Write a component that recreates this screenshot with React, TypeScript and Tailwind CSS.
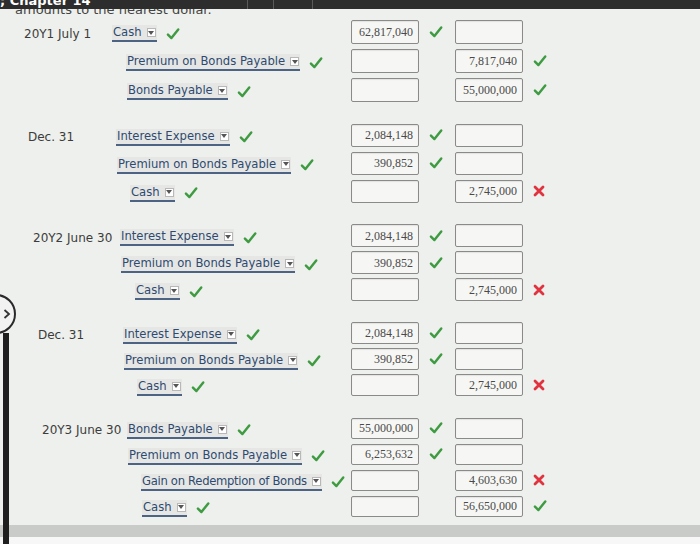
import React from 'react';

type Mark = 'ok' | 'bad' | null;

interface Row {
  date?: string;
  dateCls: string;
  account: string;
  acctCls?: string;
  debit?: string;
  debitMark?: Mark;
  credit?: string;
  creditMark?: Mark;
}

interface Section {
  rowCls: string;
  inputCls: string;
  rows: Row[];
}

const sections: Section[] = [
  {
    rowCls: 'h-[29px]',
    inputCls: 'h-[24px]',
    rows: [
      { date: '20Y1 July 1', dateCls: 'w-[112px] pl-[24px]', account: 'Cash', debit: '62,817,040', debitMark: 'ok' },
      { dateCls: 'w-[126px]', account: 'Premium on Bonds Payable', credit: '7,817,040', creditMark: 'ok' },
      { dateCls: 'w-[127px]', account: 'Bonds Payable', credit: '55,000,000', creditMark: 'ok' },
    ],
  },
  {
    rowCls: 'h-[28px]',
    inputCls: 'h-[23px]',
    rows: [
      { date: 'Dec. 31', dateCls: 'w-[116px] pl-[28px]', account: 'Interest Expense', debit: '2,084,148', debitMark: 'ok' },
      { dateCls: 'w-[117px]', account: 'Premium on Bonds Payable', debit: '390,852', debitMark: 'ok' },
      { dateCls: 'w-[130px]', account: 'Cash', credit: '2,745,000', creditMark: 'bad' },
    ],
  },
  {
    rowCls: 'h-[27px]',
    inputCls: 'h-[23px]',
    rows: [
      { date: '20Y2 June 30', dateCls: 'w-[120px] pl-[33px]', account: 'Interest Expense', debit: '2,084,148', debitMark: 'ok' },
      { dateCls: 'w-[121px]', account: 'Premium on Bonds Payable', debit: '390,852', debitMark: 'ok' },
      { dateCls: 'w-[135px]', account: 'Cash', credit: '2,745,000', creditMark: 'bad' },
    ],
  },
  {
    rowCls: 'h-[26px]',
    inputCls: 'h-[22px]',
    rows: [
      { date: 'Dec. 31', dateCls: 'w-[123px] pl-[38px]', account: 'Interest Expense', debit: '2,084,148', debitMark: 'ok' },
      { dateCls: 'w-[124px]', account: 'Premium on Bonds Payable', debit: '390,852', debitMark: 'ok' },
      { dateCls: 'w-[137px]', account: 'Cash', credit: '2,745,000', creditMark: 'bad' },
    ],
  },
  {
    rowCls: 'h-[26px]',
    inputCls: 'h-[21px]',
    rows: [
      { date: '20Y3 June 30', dateCls: 'w-[127px] pl-[42px]', account: 'Bonds Payable', debit: '55,000,000', debitMark: 'ok' },
      { dateCls: 'w-[128px]', account: 'Premium on Bonds Payable', debit: '6,253,632', debitMark: 'ok' },
      { dateCls: 'w-[141px]', account: 'Gain on Redemption of Bonds', acctCls: 'tracking-[-0.3px]', credit: '4,603,630', creditMark: 'bad' },
      { dateCls: 'w-[142px]', account: 'Cash', credit: '56,650,000', creditMark: 'ok' },
    ],
  },
];

const Check = () => (
  <svg width="14" height="14" viewBox="0 0 16 16" className="shrink-0">
    <path d="M2.2 8.6 L6.2 12.6 L14 2.8" fill="none" stroke="#3f9b42" strokeWidth="2.8" strokeLinecap="round" strokeLinejoin="round" />
  </svg>
);

const Cross = () => (
  <svg width="12" height="12" viewBox="0 0 12 12" className="shrink-0">
    <path d="M2 2 L10 10 M10 2 L2 10" stroke="#e0323f" strokeWidth="2.8" strokeLinecap="round" />
  </svg>
);

const MarkIcon = ({ mark }: { mark?: Mark }) => {
  if (mark === 'ok') return <Check />;
  if (mark === 'bad') return <Cross />;
  return null;
};

const Dropdown = ({ label, cls = '' }: { label: string; cls?: string }) => (
  <span className="inline-flex shrink-0 items-center whitespace-nowrap bg-[#e6e7e5] border-b-2 border-[#4d6384] px-[1px] leading-[15px]">
    <span className={`text-[#2e4a70] text-[11.6px] ${cls}`}>{label}</span>
    <span className="ml-[5px] flex items-center justify-center w-[9px] h-[9px] bg-white border border-[#b8b8b8]">
      <span className="block w-0 h-0 border-l-[3px] border-r-[3px] border-t-[4px] border-l-transparent border-r-transparent border-t-[#555]" />
    </span>
  </span>
);

const AmountBox = ({ value, cls }: { value?: string; cls: string }) => (
  <div
    className={`w-[68px] shrink-0 ${cls} flex items-center justify-end pr-[5px] border border-[#8a8b89] rounded-[2px] bg-[#f6f7f4] text-[12px] text-[#4a4a4a] shadow-[inset_0_1px_1px_rgba(0,0,0,0.08)]`}
    style={{ fontFamily: '"Liberation Serif", serif' }}
  >
    {value}
  </div>
);

export default function App() {
  return (
    <div
      className="relative w-[700px] h-[544px] overflow-hidden bg-[#edf0ec]"
      style={{ fontFamily: '"DejaVu Sans", Verdana, sans-serif' }}
    >
      {/* header strip, cut off by the photo */}
      <div className="h-[9px] bg-[#2d2d2d] overflow-hidden flex">
        <span className="w-[247px] text-white text-[13px] font-bold leading-none -mt-[6px] whitespace-nowrap">; Chapter 14</span>
        <div className="w-[26px] border-l border-[#5a5a5a]" />
        <div className="w-[39px] border-l border-[#5a5a5a]" />
        <div className="border-l border-[#5a5a5a]" />
      </div>
      <div className="h-[5px] overflow-hidden">
        <div className="-mt-[9px] pl-[15px] text-[13px] text-[#444]">amounts to the nearest dollar.</div>
      </div>

      <div className="flex flex-col gap-[17px] pt-[3px]">
        {sections.map((section, si) => (
          <div key={si} className="flex flex-col">
            {section.rows.map((row, ri) => (
              <div key={ri} className={`flex items-center ${section.rowCls}`}>
                <div className="w-[351px] shrink-0 flex items-center pt-[4px]">
                  <span className={`${row.dateCls} shrink-0 text-[12px] text-[#3c3c3c] whitespace-nowrap`}>{row.date}</span>
                  <Dropdown label={row.account} cls={row.acctCls} />
                  <span className="ml-[9px] shrink-0">
                    <Check />
                  </span>
                </div>
                <AmountBox value={row.debit} cls={section.inputCls} />
                <div className="w-[36px] shrink-0 pl-[10px] flex items-center">
                  <MarkIcon mark={row.debitMark} />
                </div>
                <AmountBox value={row.credit} cls={section.inputCls} />
                <div className="pl-[10px] flex items-center">
                  <MarkIcon mark={row.creditMark} />
                </div>
              </div>
            ))}
          </div>
        ))}
      </div>

      {/* bottom edge of the panel */}
      <div className="absolute left-0 right-0 top-[525px] h-[12px] bg-[#c9cbc8]" />
      <div className="absolute left-0 right-0 top-[537px] bottom-0 bg-[#f7f7f7]" />

      {/* side navigation button at the left edge */}
      <div className="absolute left-[-24px] top-[294px] w-[40px] h-[40px] rounded-full border-2 border-[#2a2a2a] bg-[#f2f2f2] flex items-center justify-end pr-[3px]">
        <svg width="8" height="10" viewBox="0 0 8 10">
          <path d="M1.5 1 L6 5 L1.5 9" fill="none" stroke="#333" strokeWidth="1.8" />
        </svg>
      </div>
      <div className="absolute left-[3px] top-[333px] bottom-0 w-[6px] bg-[#1f1f1f]" />
    </div>
  );
}
